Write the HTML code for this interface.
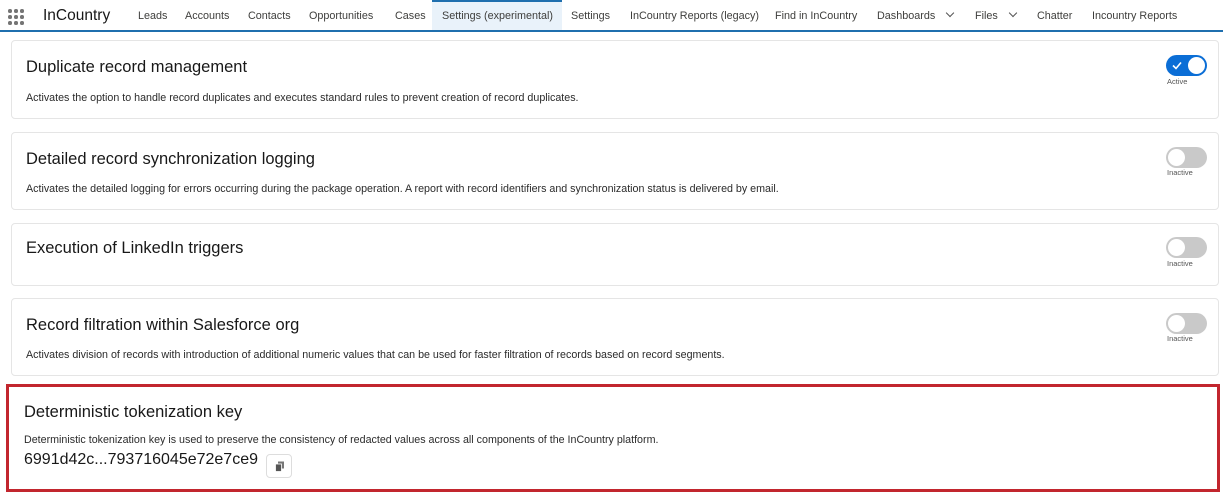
<!DOCTYPE html>
<html><head><style>
*{margin:0;padding:0;box-sizing:border-box}
body{width:1223px;height:494px;background:#fff;font-family:"Liberation Sans",sans-serif;color:#181818;position:relative;overflow:hidden}
.nav{position:absolute;left:0;top:0;width:1223px;height:32px;border-bottom:2px solid #1f6fae;background:#fff}
.dots{position:absolute;left:8px;top:9px;width:16px;height:16px}
.dots i{position:absolute;width:3.5px;height:3.5px;border-radius:50%;background:#747474}
.brand{position:absolute;left:43px;top:7px;font-size:15.5px;color:#181818}
.nav span{position:absolute;top:10px;font-size:10.8px;color:#3e3e3c}
.act{position:absolute;left:432px;top:0;width:130px;height:30px;background:#e9f2fa;border-top:2px solid #1f6fae}
.chev{display:inline-block;width:6px;height:6px;border-right:1.3px solid #555;border-bottom:1.3px solid #555;transform:rotate(45deg);margin-left:12px;position:relative;top:-3px}
.card{position:absolute;left:11px;width:1208px;border:1px solid #e5e5e5;border-radius:4px;background:#fff}
.t{position:absolute;left:14px;font-size:16.5px;color:#181818}
.d{position:absolute;left:14px;font-size:10.7px;color:#2b2b2b}
.tg{position:absolute;left:1154px;width:41px;height:21px;border-radius:11px;background:#c9c9c9}
.tg::after{content:"";position:absolute;top:2px;left:2px;width:17px;height:17px;border-radius:50%;background:#fff}
.tg.on{background:#0b6ed6}
.tg.on::after{left:22px}
.tl{position:absolute;left:1155px;font-size:7.5px;color:#555}
.red{position:absolute;left:6px;top:384px;width:1214px;height:108px;border:3px solid #c2262e}
</style></head><body>
<div class="nav">
<div class="dots"><i style="left:0;top:0"></i><i style="left:6px;top:0"></i><i style="left:12px;top:0"></i><i style="left:0;top:6px"></i><i style="left:6px;top:6px"></i><i style="left:12px;top:6px"></i><i style="left:0;top:12px"></i><i style="left:6px;top:12px"></i><i style="left:12px;top:12px"></i></div>
<div class="brand">InCountry</div>
<div class="act"></div>
<span style="left:138px">Leads</span>
<span style="left:185px">Accounts</span>
<span style="left:248px">Contacts</span>
<span style="left:309px">Opportunities</span>
<span style="left:395px">Cases</span>
<span style="left:442px">Settings (experimental)</span>
<span style="left:571px">Settings</span>
<span style="left:630px">InCountry Reports (legacy)</span>
<span style="left:775px">Find in InCountry</span>
<span style="left:877px">Dashboards<i class="chev"></i></span>
<span style="left:975px">Files<i class="chev"></i></span>
<span style="left:1037px">Chatter</span>
<span style="left:1092px">Incountry Reports</span>
</div>

<div class="card" style="top:40px;height:79px">
<div class="t" style="top:17px">Duplicate record management</div>
<div class="d" style="top:51px">Activates the option to handle record duplicates and executes standard rules to prevent creation of record duplicates.</div>
<div class="tg on" style="top:14px"><svg style="position:absolute;left:6px;top:6px" width="10" height="9" viewBox="0 0 10 9"><path d="M1 4.5L4 7.5L9 1.5" stroke="#fff" stroke-width="1.6" fill="none"/></svg></div>
<div class="tl" style="top:36px;left:1155px">Active</div>
</div>

<div class="card" style="top:132px;height:78px">
<div class="t" style="top:17px">Detailed record synchronization logging</div>
<div class="d" style="top:50px">Activates the detailed logging for errors occurring during the package operation. A report with record identifiers and synchronization status is delivered by email.</div>
<div class="tg" style="top:14px"></div>
<div class="tl" style="top:35px">Inactive</div>
</div>

<div class="card" style="top:223px;height:63px">
<div class="t" style="top:15px">Execution of LinkedIn triggers</div>
<div class="tg" style="top:13px"></div>
<div class="tl" style="top:35px">Inactive</div>
</div>

<div class="card" style="top:298px;height:78px">
<div class="t" style="top:17px">Record filtration within Salesforce org</div>
<div class="d" style="top:50px">Activates division of records with introduction of additional numeric values that can be used for faster filtration of records based on record segments.</div>
<div class="tg" style="top:14px"></div>
<div class="tl" style="top:35px">Inactive</div>
</div>

<div class="red">
<div style="position:absolute;left:15px;top:16px;font-size:16.5px">Deterministic tokenization key</div>
<div style="position:absolute;left:15px;top:47px;font-size:10.7px;color:#2b2b2b">Deterministic tokenization key is used to preserve the consistency of redacted values across all components of the InCountry platform.</div>
<div style="position:absolute;left:15px;top:64px;font-size:16px">6991d42c...793716045e72e7ce9</div>
<div style="position:absolute;left:257px;top:67px;width:26px;height:24px;border:1px solid #ddd;border-radius:4px"><svg style="position:absolute;left:8px;top:6px" width="10" height="11" viewBox="0 0 10 11"><rect x="3" y="0.5" width="6" height="7" fill="#777"/><rect x="0.5" y="3" width="6" height="7.5" fill="#555" stroke="#fff" stroke-width="0.8"/></svg></div>
</div>
</body></html>
